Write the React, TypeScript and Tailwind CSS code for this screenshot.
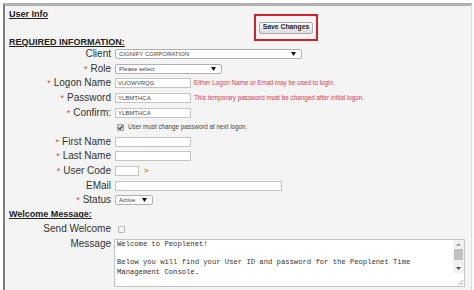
import { ReactNode } from "react";

const sans = { fontFamily: '"Liberation Sans", Arial, sans-serif' };

function Caret() {
  return (
    <svg width="5" height="4" viewBox="0 0 5 4" className="shrink-0">
      <path d="M0 0 L5 0 L2.5 4 Z" fill="#111" />
    </svg>
  );
}

function Row({
  label,
  req,
  children,
}: {
  label?: string;
  req?: boolean;
  children?: ReactNode;
}) {
  return (
    <div className="flex h-[14.6px] items-center">
      <div className="w-[102px] shrink-0 text-right text-[10px] leading-none text-[#333]">
        {req && <span className="mr-[3px] text-[9px] text-[#e0443c]">*</span>}
        {label}
      </div>
      <div className="ml-[4px] flex items-center">{children}</div>
    </div>
  );
}

function TextBox({ value = "", w }: { value?: string; w: string }) {
  return (
    <input
      readOnly
      value={value}
      className={`h-[10px] ${w} border border-[#c4c4c4] bg-white px-[2px] text-[6px] leading-[8px] text-[#444] outline-none`}
    />
  );
}

function Select({ value, w }: { value: string; w: string }) {
  return (
    <div
      className={`flex h-[10px] ${w} items-center justify-between rounded-[2px] border border-[#b0b0b0] bg-white pl-[3px] pr-[5px] text-[6px] leading-none text-[#444]`}
    >
      <span>{value}</span>
      <Caret />
    </div>
  );
}

function Hint({ children }: { children: ReactNode }) {
  return <span className="ml-[3px] text-[6.3px] leading-none text-[#e0404a]">{children}</span>;
}

export default function App() {
  return (
    <div className="h-[290px] w-[474px] overflow-hidden bg-white" style={sans}>
      <div className="ml-[3px] mr-[2px] mt-[3px] h-[300px] border-l-2 border-r border-t-[3px] border-l-[#7d7d7d] border-r-[#dcdcdc] border-t-[#b2b2b2] bg-[#f4f4f4] pl-[4px]">
        <div className="flex h-[35px] items-start">
          <div className="w-[245px] pt-[3px] text-[9px] font-bold leading-[10px] text-[#222] underline">
            User Info
          </div>
          <div className="mt-[8px] flex h-[27px] w-[64px] items-center justify-center border-2 border-[#d3212b]">
            <button className="h-[12px] w-[54px] rounded-[2px] border border-[#a9a9a9] bg-gradient-to-b from-[#fafafa] to-[#dcdcdc] text-[6.8px] font-bold leading-none text-[#222]">
              Save Changes
            </button>
          </div>
        </div>

        <div className="-mt-[4px] h-[10px] text-[9px] font-bold leading-[10px] text-[#222] underline">
          REQUIRED INFORMATION:
        </div>

        <Row label="Client">
          <Select value="CIGNIFY CORPORATION" w="w-[187px]" />
        </Row>
        <Row label="Role" req>
          <Select value="Please select" w="w-[107px]" />
        </Row>
        <Row label="Logon Name" req>
          <TextBox value="VUOWVRQG" w="w-[76px]" />
          <Hint>Either Logon Name or Email may be used to login.</Hint>
        </Row>
        <Row label="Password" req>
          <TextBox value="YLBMTHCA" w="w-[76px]" />
          <Hint>This temporary password must be changed after initial logon.</Hint>
        </Row>
        <Row label="Confirm:" req>
          <TextBox value="YLBMTHCA" w="w-[76px]" />
        </Row>
        <Row>
          <div className="ml-[2px] flex h-[7px] w-[7px] items-center justify-center rounded-[1px] border border-[#9a9a9a] bg-[#dedede]">
            <svg width="5" height="5" viewBox="0 0 5 5">
              <path d="M0.6 2.6 L2 4 L4.5 0.8" stroke="#222" strokeWidth="1.1" fill="none" />
            </svg>
          </div>
          <span className="ml-[4px] text-[6.3px] leading-none text-[#444]">
            User must change password at next logon.
          </span>
        </Row>
        <Row label="First Name" req>
          <TextBox w="w-[76px]" />
        </Row>
        <Row label="Last Name" req>
          <TextBox w="w-[76px]" />
        </Row>
        <Row label="User Code" req>
          <TextBox w="w-[24px]" />
          <span className="ml-[5px] text-[8px] font-bold leading-none text-[#f08a24]">&gt;</span>
        </Row>
        <Row label="EMail">
          <TextBox w="w-[167px]" />
        </Row>
        <Row label="Status" req>
          <Select value="Active" w="w-[38px]" />
        </Row>
        <div className="flex h-[14.6px] items-center text-[9px] font-bold leading-none text-[#222] underline">
          Welcome Message:
        </div>
        <Row label="Send Welcome">
          <div className="ml-[3px] h-[7px] w-[7px] rounded-[1px] border border-[#b8b8b8] bg-[#f7f7f7]" />
        </Row>

        <div className="flex items-start">
          <div className="flex h-[14.6px] w-[102px] shrink-0 items-center justify-end text-[10px] leading-none text-[#333]">
            Message
          </div>
          <div className="relative ml-[3px] mt-[2px] h-[48px] w-[351px] border border-[#c4c4c4] bg-white">
            <textarea
              readOnly
              value={
                "Welcome to Peoplenet!\n\nBelow you will find your User ID and password for the Peoplenet Time Management Console."
              }
              className="block h-full w-[338px] resize-none overflow-hidden bg-transparent pl-[2px] pt-0 text-[7.2px] leading-[9.3px] text-[#333] outline-none"
              style={{ fontFamily: '"Liberation Mono", "DejaVu Sans Mono", monospace' }}
            />
            <div className="absolute right-0 top-0 flex h-full w-[11px] flex-col bg-[#f1f1f1]">
              <div className="flex h-[9px] items-center justify-center">
                <svg width="5" height="3" viewBox="0 0 5 3">
                  <path d="M0 3 L2.5 0 L5 3 Z" fill="#a3a3a3" />
                </svg>
              </div>
              <div className="mx-[1px] h-[11px] bg-[#c1c1c1]" />
              <div className="h-[4px]" />
              <div className="flex h-[9px] items-center justify-center">
                <svg width="5" height="3" viewBox="0 0 5 3">
                  <path d="M0 0 L5 0 L2.5 3 Z" fill="#505050" />
                </svg>
              </div>
              <div className="flex flex-1 items-end justify-end bg-white pb-[1px] pr-[1px]">
                <svg width="6" height="6" viewBox="0 0 6 6">
                  <path d="M6 1 L1 6 M6 4 L4 6" stroke="#9a9a9a" strokeWidth="0.8" />
                </svg>
              </div>
            </div>
          </div>
        </div>
      </div>
    </div>
  );
}
